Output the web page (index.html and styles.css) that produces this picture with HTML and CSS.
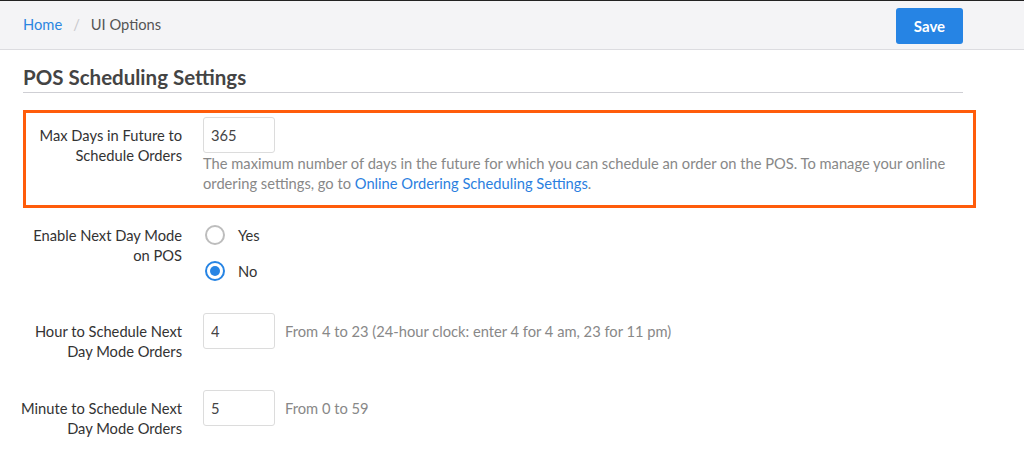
FILE: index.html
```html
<!DOCTYPE html>
<html lang="en">
<head>
<meta charset="utf-8">
<title>UI Options</title>
<link rel="stylesheet" href="styles.css">
</head>
<body>
<header class="topbar">
  <nav class="crumbs">
    <a class="crumb-link" href="#">Home</a>
    <span class="crumb-sep">/</span>
    <span class="crumb-current">UI Options</span>
  </nav>
  <button class="btn-save" type="button">Save</button>
</header>
<main class="page">
  <h1 class="section-title">POS Scheduling Settings</h1>
  <div class="form">
    <div class="row row--highlight">
      <label class="row-label">Max Days in Future to Schedule Orders</label>
      <div class="row-field">
        <input class="text-input" type="text" value="365">
        <p class="help-block">The maximum number of days in the future for which you can schedule an order on the POS. To manage your online ordering settings, go to <a class="help-link" href="#">Online Ordering Scheduling Settings</a>.</p>
      </div>
    </div>
    <div class="row">
      <label class="row-label">Enable Next Day Mode on POS</label>
      <div class="row-field">
        <div class="radio"><span class="radio-dot"></span><span class="radio-text">Yes</span></div>
        <div class="radio"><span class="radio-dot radio-dot--on"></span><span class="radio-text">No</span></div>
      </div>
    </div>
    <div class="row row--tall">
      <label class="row-label">Hour to Schedule Next Day Mode Orders</label>
      <div class="row-field row-field--inline">
        <input class="text-input" type="text" value="4">
        <span class="help-inline">From 4 to 23 (24-hour clock: enter 4 for 4 am, 23 for 11 pm)</span>
      </div>
    </div>
    <div class="row">
      <label class="row-label">Minute to Schedule Next Day Mode Orders</label>
      <div class="row-field row-field--inline">
        <input class="text-input" type="text" value="5">
        <span class="help-inline">From 0 to 59</span>
      </div>
    </div>
  </div>
</main>
</body>
</html>
```

FILE: styles.css
```css
* { box-sizing: border-box; }
html, body { margin: 0; padding: 0; background: #fff; }
body {
  font-family: Lato, "Liberation Sans", sans-serif;
  font-size: 14.7px;
  color: #333;
  border-top: 1px solid #222;
}
.topbar {
  height: 49px;
  background: #f4f4f6;
  border-bottom: 1px solid #dcdce0;
  display: flex;
  align-items: center;
  justify-content: space-between;
  padding: 0 61px 0 23px;
}
.crumbs { display: flex; align-items: center; gap: 11px; margin-top: -2px; }
.crumb-link { color: #2b86e0; text-decoration: none; }
.crumb-sep { color: #c8c8cc; }
.crumb-current { color: #555; }
.btn-save {
  width: 67px;
  height: 36px;
  margin-top: 1px;
  background: #2684e4;
  color: #fff;
  border: none;
  border-radius: 3px;
  font-family: inherit;
  font-size: 15px;
  font-weight: 700;
}
.page { padding: 0 61px 0 23px; }
.section-title {
  margin: 15px 0 0;
  font-size: 20.5px;
  line-height: 24px;
  font-weight: 700;
  color: #444;
  padding-bottom: 3px;
  border-bottom: 1px solid #cfcfd4;
}
.form {
  display: flex;
  flex-direction: column;
  gap: 24px;
  margin-top: 20px;
}
.row {
  display: grid;
  grid-template-columns: 159px 1fr;
  column-gap: 21px;
  align-items: start;
}
.row--highlight {
  grid-template-columns: 156px 1fr;
  margin-left: 3px;
  margin-right: -10px;
  padding: 4px 0 12px;
  margin-bottom: -12px;
  outline: 3px solid #ff5c0a;
}
.row--tall { min-height: 53px; }
.row-label {
  text-align: right;
  line-height: 20px;
  padding-top: 8px;
  margin-left: -6px;
  color: #333;
}
.row-field { min-width: 0; }
.row-field--inline { display: flex; align-items: center; gap: 10px; }
.text-input {
  display: block;
  width: 72px;
  height: 36px;
  border: 1px solid #dcdcdc;
  border-radius: 3px;
  padding: 0 7px;
  font-family: inherit;
  font-size: 14.7px;
  color: #444;
  background: #fff;
}
.help-block {
  margin: 0;
  padding-right: 10px;
  line-height: 20px;
  color: #888;
}
.help-inline { color: #888; line-height: 20px; }
.help-link { color: #2b7fe0; text-decoration: none; }
.radio {
  display: flex;
  align-items: center;
  height: 36px;
  padding-left: 2px;
  gap: 13px;
}
.radio-dot {
  width: 20px;
  height: 20px;
  border-radius: 50%;
  border: 2px solid #bdbdbd;
  background: #fff;
  position: relative;
}
.radio-dot--on { border-color: #2684e4; }
.radio-dot--on::after {
  content: "";
  position: absolute;
  left: 3px;
  top: 3px;
  width: 10px;
  height: 10px;
  border-radius: 50%;
  background: #2684e4;
}
.radio-text { color: #333; }
```
